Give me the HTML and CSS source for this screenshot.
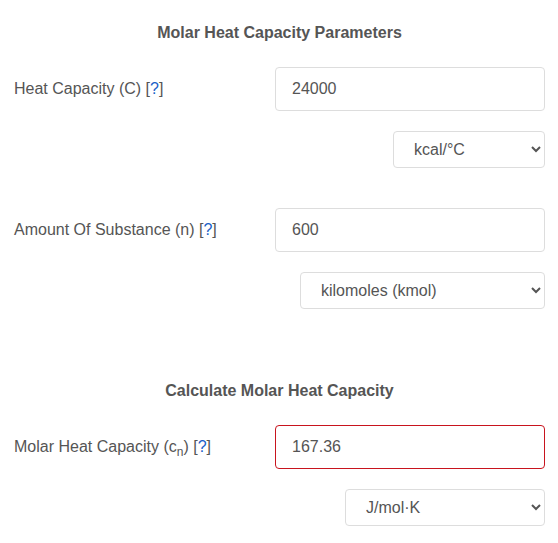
FILE: index.html
```html
<!DOCTYPE html>
<html lang="en">
<head>
    <meta charset="UTF-8">
    <meta name="viewport" content="width=device-width, initial-scale=1.0">
    <title>Molar Heat Capacity</title>
    <link rel="stylesheet" href="styles.css">
</head>
<body>
    <div class="calc">
        <h3 class="section-title">Molar Heat Capacity Parameters</h3>

        <div class="group">
            <div class="field-row">
                <label for="heat-capacity">Heat Capacity (C) [<a href="#">?</a>]</label>
                <input type="text" id="heat-capacity" value="24000">
            </div>
            <div class="unit-row">
                <select class="unit-heat">
                    <option>kcal/°C</option>
                </select>
            </div>
        </div>

        <div class="group">
            <div class="field-row">
                <label for="amount">Amount Of Substance (n) [<a href="#">?</a>]</label>
                <input type="text" id="amount" value="600">
            </div>
            <div class="unit-row">
                <select class="unit-amount">
                    <option>kilomoles (kmol)</option>
                </select>
            </div>
        </div>

        <h3 class="section-title result-title">Calculate Molar Heat Capacity</h3>

        <div class="group">
            <div class="field-row">
                <label for="molar">Molar Heat Capacity (c<sub>n</sub>) [<a href="#">?</a>]</label>
                <input type="text" id="molar" class="result" value="167.36">
            </div>
            <div class="unit-row">
                <select class="unit-molar">
                    <option>J/mol·K</option>
                </select>
            </div>
        </div>
    </div>
</body>
</html>
```

FILE: styles.css
```css
body {
    margin: 0;
    font-family: "Liberation Sans", Arial, sans-serif;
    font-size: 16px;
    color: #555;
    background: #fff;
}
.calc {
    padding: 0 13px 0 14px;
}
.section-title {
    margin: 23px 0 24px;
    font-size: 16px;
    line-height: 20px;
    font-weight: bold;
    text-align: center;
    color: #555;
}
.result-title {
    margin-top: 72px;
}
.group {
    margin-bottom: 40px;
}
.field-row {
    display: flex;
    align-items: center;
}
.field-row label {
    flex: 1;
}
.field-row label a {
    color: #1a5fc8;
    text-decoration: none;
}
.field-row sub {
    font-size: 12px;
    line-height: 0;
}
input {
    box-sizing: border-box;
    width: 270px;
    height: 44px;
    padding: 0 16px;
    border: 1px solid #ddd;
    border-radius: 4px;
    font-family: inherit;
    font-size: 16px;
    color: #555;
}
input.result {
    border-color: #c8141e;
}
.unit-row {
    display: flex;
    justify-content: flex-end;
    margin-top: 20px;
}
select {
    box-sizing: border-box;
    height: 37px;
    padding: 0 10px 0 16px;
    border: 1px solid #ddd;
    border-radius: 4px;
    background: #fff;
    font-family: inherit;
    font-size: 16px;
    color: #555;
}
.unit-heat {
    width: 152px;
}
.unit-amount {
    width: 245px;
}
.unit-molar {
    width: 200px;
}
```
